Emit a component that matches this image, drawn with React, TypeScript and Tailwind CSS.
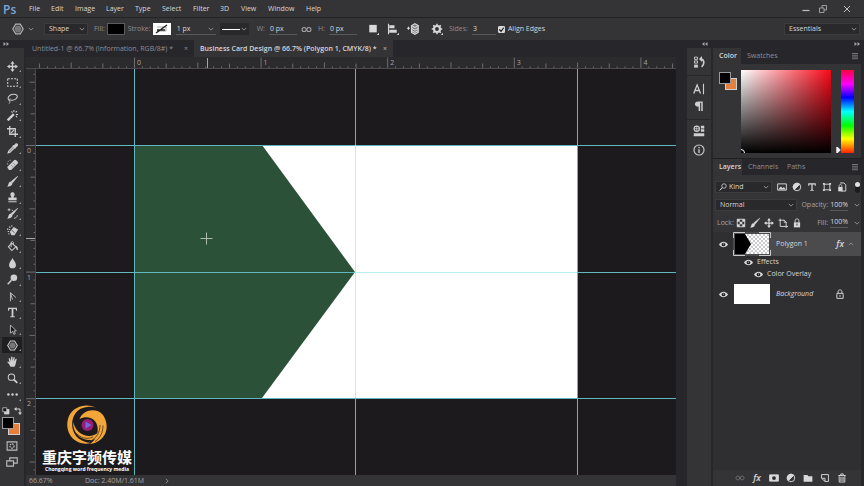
import { useState } from "react";
import type { ReactNode } from "react";
import clsx from "clsx";

const menus = [
  { label: "File", width: "w-[22px]" },
  { label: "Edit", width: "w-[24px]" },
  { label: "Image", width: "w-[31px]" },
  { label: "Layer", width: "w-[29px]" },
  { label: "Type", width: "w-[27px]" },
  { label: "Select", width: "w-[31px]" },
  { label: "Filter", width: "w-[27px]" },
  { label: "3D", width: "w-[21px]" },
  { label: "View", width: "w-[27px]" },
  { label: "Window", width: "w-[38px]" },
  { label: "Help", width: "w-[24px]" },
];

function Icon({ children, className = "size-3" }: { children: ReactNode; className?: string }) {
  return (
    <svg
      viewBox="0 0 16 16"
      className={clsx("shrink-0", className)}
      fill="none"
      stroke="currentColor"
      strokeWidth="1.5"
      aria-hidden="true"
    >
      {children}
    </svg>
  );
}

function Chevron({ className = "" }: { className?: string }) {
  return (
    <svg
      viewBox="0 0 8 8"
      className={clsx("size-[6px] shrink-0 pointer-events-none text-[#8f8e91]", className)}
      fill="none"
      stroke="currentColor"
      strokeWidth="1.3"
      aria-hidden="true"
    >
      <path d="M1 2.5 4 5.5 7 2.5" />
    </svg>
  );
}

const polygonShape = (
  <>
    <path d="M5 1.5h6L15 8l-4 6.5H5L1 8z" />
    <path d="M5.5 3.5h5L13 8l-2.5 4.5h-5L3 8z" fill="#77767a" stroke="none" />
  </>
);

const moveShape = (
  <path
    d="M8 0 11 4H9v3h3V5l4 3-4 3V9H9v3h2l-3 4-3-4h2V9H4v2L0 8l4-3v2h3V4H5z"
    fill="currentColor"
    stroke="none"
  />
);

const brushShape = (
  <>
    <path d="M15.5 0.5 8 10 6 8z" fill="currentColor" strokeWidth="1" />
    <path d="M5.5 8.5c2 .5 3 2 2 4-1.500 2.500-4.500 3-7.500 3 2-1.500 1.500-3 2.500-5 .7-1.300 1.700-2 3-2z" fill="currentColor" stroke="none" />
  </>
);

const tools = [
  { name: "Move", shape: moveShape },
  { name: "Rectangular Marquee", shape: <path d="M1 2.5h14v11H1z" strokeDasharray="3 1.7" /> },
  {
    name: "Lasso",
    shape: (
      <>
        <path d="M4 10.5C1.500 10 1 7.500 2.500 5 5 1.500 12 .5 14.500 3.500 16.500 7 11 11.500 6 10.500" />
        <path d="M6 9c-2-.8-3.500.5-3 1.800S6 12 6 10.500M3.500 12c1 1 .5 2.500-.5 3.500" strokeWidth="1.2" />
      </>
    ),
  },
  {
    name: "Magic Wand",
    shape: (
      <>
        <path d="M1 15 10 6" strokeWidth="3.5" />
        <path d="M10 0v3M14.500 1.500l-2 2M13 6.500h3M6.500 2l1.500 2M13 8.500l1.500 2" />
      </>
    ),
  },
  { name: "Crop", shape: <path d="M4 0v12h12M0 4h12v12M10 6l-4 4" strokeWidth="1.9" /> },
  {
    name: "Eyedropper",
    shape: (
      <>
        <path d="m8.500 3.500 4 4M10 5l2.500-3c1-1.500 3.500 0 2 2L12 6" fill="currentColor" strokeWidth="2" />
        <path d="M9.500 4.500 2.500 11.500 1.500 14.500l3-1 7-7z" fill="currentColor" fillOpacity=".6" />
      </>
    ),
  },
  {
    name: "Healing Brush",
    shape: (
      <>
        <path d="M4.500 8.500 11 2c1-1 5 2.500 4 4L8.500 12.500 5.500 15.500c-1.500.5-5-2.500-4-4z" fill="currentColor" />
        <path d="m5.500 8.500 3.500 3.500M8.500 5.500l3.500 3.500" stroke="#77767a" strokeWidth="1" />
        <path d="M1 8C0 4 3 .8 7 2" strokeDasharray="2 1.5" strokeWidth="1" />
      </>
    ),
  },
  { name: "Brush", shape: brushShape },
  {
    name: "Clone Stamp",
    shape: (
      <path
        d="M6.500 8C6 6.500 4.500 5 5 3c.5-3.500 5.500-3.500 6 0 .5 2-1 3.500-1.500 5H14v4H2V8zM2 13.500h12V15H2z"
        fill="currentColor"
        stroke="none"
      />
    ),
  },
  {
    name: "History Brush",
    shape: (
      <>
        {brushShape}
        <path d="M1 2.500h4M3 .5v4M7 3l2 1M10 15c3-.5 5-2 5-4.500" strokeWidth="1.3" />
      </>
    ),
  },
  {
    name: "Eraser",
    shape: (
      <>
        <path d="m5 10 5-6 5 3-4.500 7H7z" fill="currentColor" />
        <path d="m7 8 4 3" stroke="#343336" strokeWidth="1" />
        <path d="M0 6h2M3 3h2M6 1.500h2M1 9.500h2M3 6.500h1.500M2 13h1.500" strokeWidth="1.7" />
      </>
    ),
  },
  {
    name: "Paint Bucket",
    shape: (
      <>
        <path d="m7 3 6 5.500-6 5.500-5-5.500z" />
        <path d="M6 9V3c0-3 3.500-3 3.500 0v2" strokeWidth="1.2" />
        <path d="M12 7c3 .5 4.500 3 3.500 6-1.500.5-2-1-2-2.500z" fill="currentColor" stroke="none" />
      </>
    ),
  },
  {
    name: "Blur",
    shape: <path d="M8 0c2 4 5 6.500 5 10a5 5 0 0 1-10 0C3 6.500 6 4 8 0z" fill="currentColor" stroke="none" />,
  },
  {
    name: "Dodge",
    shape: (
      <>
        <circle cx="10" cy="5.5" r="4.8" fill="currentColor" stroke="none" />
        <path d="m6.500 9-5.500 6" strokeWidth="2" />
      </>
    ),
  },
  { name: "Pen", shape: <path d="M5 15V2.500L13 9.500M5 2.500l3 10" strokeWidth="1.2" /> },
  {
    name: "Type",
    shape: (
      <path
        d="M1.500 1h13v4.500h-1.300L12.500 3H9.300v10.300l2.200.5V15h-7v-1.200l2.200-.5V3H3.500l-.7 2.500H1.500z"
        fill="currentColor"
        stroke="none"
      />
    ),
  },
  { name: "Path Selection", shape: <path d="M5 1.500v12l3-3 2 4.500 2-1-2-4h3.500z" fill="#161518" strokeWidth="1.2" /> },
  { name: "Polygon", shape: polygonShape },
  {
    name: "Hand",
    shape: (
      <path
        d="M5 15.500C4 13 2.500 11 .5 9c0-1.300 1.500-1.300 3 .3L2.500 4c0-1.300 1.500-1.400 2 0l1 3.500L6 1.500C6.200.3 7.700.3 8 1.500v5.800l1.500-5c.5-1.200 2-.8 1.700.5l-.7 5 2-3.500c.8-1 2.200-.2 1.500 1-1 2.700-1 7-3 10.200z"
        fill="currentColor"
        stroke="none"
      />
    ),
  },
  {
    name: "Zoom",
    shape: (
      <>
        <circle cx="6.5" cy="6" r="4.7" />
        <path d="m10 9.500 5 5" strokeWidth="2.5" />
      </>
    ),
  },
  {
    name: "Edit Toolbar",
    shape: (
      <g fill="currentColor" stroke="none">
        <circle cx="2" cy="8" r="1.8" />
        <circle cx="8" cy="8" r="1.8" />
        <circle cx="14" cy="8" r="1.8" />
      </g>
    ),
  },
];

const linkShape = (
  <>
    <circle cx="4.5" cy="8" r="3" />
    <circle cx="11.5" cy="8" r="3" />
  </>
);

const adjustShape = (
  <>
    <circle cx="8" cy="8" r="6" />
    <path d="M12.300 3.700A6 6 0 0 0 3.700 12.300z" fill="currentColor" />
  </>
);

const imageShape = (
  <>
    <path d="M1 3h14v10H1z" />
    <path d="m2 12 4-5 3 3 2-2 3 4z" fill="currentColor" stroke="none" />
  </>
);

const frameShape = (
  <>
    <path d="M3.500 3.500h9v9h-9z" />
    <path d="M1.500 1.500h3v3h-3zM11.500 1.500h3v3h-3zM1.500 11.500h3v3h-3zM11.500 11.500h3v3h-3z" fill="currentColor" stroke="none" />
  </>
);

const lockShape = (
  <>
    <path d="M3 7h10v8H3z" fill="currentColor" stroke="none" />
    <path d="M5 7V4c0-3.500 6-3.500 6 0v3" />
    <path d="M8 9v3" stroke="#343336" />
  </>
);

const smartShape = (
  <>
    <path d="M5 1.500h6l3 3v10H7" />
    <path d="M2 8h7v7H2z" fill="currentColor" stroke="none" />
    <path d="M3.500 8V5.500c0-2 4-2 4 0V8" strokeWidth="1.2" />
  </>
);

function IconButton({
  label,
  children,
  className,
}: {
  label: string;
  children: ReactNode;
  className?: string;
}) {
  return (
    <button type="button" aria-label={label} title={label} className={clsx("flex items-center justify-center", className)}>
      {children}
    </button>
  );
}

function SelectBox({
  label,
  options,
  className,
}: {
  label: string;
  options: string[];
  className?: string;
}) {
  return (
    <label className={clsx("relative flex items-center bg-[#29282b] border border-[#3c3b3e]", className)}>
      <select aria-label={label} className="w-full appearance-none bg-transparent pl-1 outline-none">
        {options.map((option) => (
          <option key={option}>{option}</option>
        ))}
      </select>
      <Chevron className="absolute right-[2px]" />
    </label>
  );
}

function Field({ label, value, className }: { label: string; value: string; className: string }) {
  return (
    <label className="flex items-center gap-1">
      <span className="text-[#8f8e91]">{label}</span>
      <input
        type="text"
        defaultValue={value}
        className={clsx("h-3 border-b border-[#5a595c] bg-transparent px-px outline-none", className)}
      />
    </label>
  );
}

function MenuBar() {
  return (
    <header className="flex h-[18px] shrink-0 items-center border-b border-[#232225] bg-[#343336]">
      <svg viewBox="0 0 20 16" className="ml-[3px] h-4 w-5" role="img" aria-label="Ps">
        <text x="0" y="13" className="fill-[#7aa9d6] font-['Open_Sans'] text-[12px] font-semibold">
          Ps
        </text>
      </svg>
      <nav className="ml-[6px] flex">
        {menus.map((menu) => (
          <button key={menu.label} type="button" className={clsx("text-left", menu.width)}>
            {menu.label}
          </button>
        ))}
      </nav>
      <div className="ml-auto flex items-center pr-[11px] text-[#bdbcbf]">
        <IconButton label="Minimize" className="w-3">
          <Icon className="size-2">
            <path d="M1 11h14" strokeWidth="2.5" />
          </Icon>
        </IconButton>
        <IconButton label="Restore" className="ml-[5px] w-3">
          <Icon className="size-2">
            <path d="M1 6h9v9H1zM6 6V1h9v9h-5" />
          </Icon>
        </IconButton>
        <IconButton label="Close" className="ml-3 w-3">
          <Icon className="size-2">
            <path d="m2 2 12 12M14 2 2 14" strokeWidth="2" />
          </Icon>
        </IconButton>
      </div>
    </header>
  );
}

const corner = <path d="M16 13v3h-3z" fill="currentColor" stroke="none" />;

function OptionsBar() {
  return (
    <div className="flex h-[22px] shrink-0 items-center bg-[#343336] pl-3">
      <IconButton label="Polygon tool presets" className="gap-1 text-[#b5b4b7]">
        <Icon>{polygonShape}</Icon>
        <Chevron />
      </IconButton>
      <SelectBox label="Tool mode" options={["Shape", "Path", "Pixels"]} className="ml-[10px] h-3 w-11" />
      <span className="ml-[6px] text-[#8f8e91]">Fill:</span>
      <button type="button" aria-label="Fill color" className="ml-[2px] h-3 w-[18px] border border-[#5c5b5e] bg-black" />
      <span className="ml-[3px] text-[#8f8e91]">Stroke:</span>
      <button type="button" aria-label="Stroke color" className="ml-[2px] h-3 w-[18px] bg-white">
        <svg viewBox="0 0 18 12" fill="none" aria-hidden="true">
          <path d="M4 4h9v4H4" stroke="#a9a9a9" />
          <path d="M3 10 14 2M4 7h8" stroke="#222" strokeWidth="1.5" />
        </svg>
      </button>
      <label className="relative ml-[5px] flex items-center">
        <input
          type="text"
          aria-label="Stroke width"
          defaultValue="1 px"
          className="h-3 w-10 border-b border-[#5a595c] bg-transparent px-px outline-none"
        />
        <Chevron className="absolute right-[2px]" />
      </label>
      <button
        type="button"
        aria-label="Stroke type"
        className="ml-1 flex h-3 w-[29px] items-center justify-between bg-[#29282b] px-[2px]"
      >
        <span className="h-px w-[18px] bg-white" />
        <Chevron />
      </button>
      <div className="ml-2">
        <Field label="W:" value="0 px" className="w-7" />
      </div>
      <IconButton label="Link width and height" className="ml-1 text-[#a5a4a6]">
        <Icon className="size-[11px]">{linkShape}</Icon>
      </IconButton>
      <div className="ml-[6px]">
        <Field label="H:" value="0 px" className="w-7" />
      </div>
      <div className="ml-[10px] flex items-center gap-2">
        <IconButton label="Path operations">
          <Icon>
            <path d="M3 2.500h10v10H3z" fill="currentColor" stroke="none" />
            {corner}
          </Icon>
        </IconButton>
        <IconButton label="Path alignment">
          <Icon>
            <path d="M2 1v14" />
            <path d="M3 3h7v4H3zM3 9h10v4H3z" fill="currentColor" stroke="none" />
            {corner}
          </Icon>
        </IconButton>
        <IconButton label="Path arrangement">
          <Icon>
            <path d="M0 7h4M2 5v4" />
            <path d="M6 3.500 10.500 1 15 3.500v9L10.500 15 6 12.500z" fill="#77767a" />
            <path d="m6 3.500 4.500 2.500L15 3.500M6 7l4.500 2.500L15 7M6 10l4.500 2.500L15 10" />
          </Icon>
        </IconButton>
      </div>
      <IconButton label="Geometry options" className="ml-3">
        <Icon>
          <circle cx="8" cy="8" r="4" strokeWidth="2.8" />
          <path d="M8 1v2M8 13v2M1 8h2M13 8h2M3 3l1.500 1.500M11.500 11.500 13 13M13 3l-1.500 1.500M4.500 11.500 3 13" strokeWidth="2" />
          {corner}
        </Icon>
      </IconButton>
      <div className="ml-[6px]">
        <Field label="Sides:" value="3" className="w-6" />
      </div>
      <label className="ml-[2px] flex items-center gap-[3px]">
        <span className="relative flex">
          <input
            type="checkbox"
            defaultChecked
            className="peer size-[7px] appearance-none rounded-[1px] border border-[#d8d7da] checked:bg-[#d8d7da]"
          />
          <svg
            viewBox="0 0 8 8"
            className="pointer-events-none absolute inset-0 hidden size-[7px] peer-checked:block"
            fill="none"
            stroke="#1c1b1e"
            strokeWidth="1.4"
            aria-hidden="true"
          >
            <path d="M1.500 4 3.500 6 6.500 2" />
          </svg>
        </span>
        Align Edges
      </label>
      <SelectBox
        label="Workspace"
        options={["Essentials", "3D", "Painting", "Photography"]}
        className="mr-1 ml-auto h-3 w-[76px]"
      />
    </div>
  );
}

function Swatches({ className }: { className?: string }) {
  return (
    <div className={clsx("grid h-[18px] w-[18px] grid-cols-3 grid-rows-3", className)}>
      <button
        type="button"
        aria-label="Background color"
        className="col-span-2 col-start-2 row-span-2 row-start-2 border border-[#d0cfd2] bg-[#e5803c]"
      />
      <button
        type="button"
        aria-label="Foreground color"
        className="col-span-2 col-start-1 row-span-2 row-start-1 border border-[#9b9a9d] bg-black"
      />
    </div>
  );
}

function Collapse({ direction }: { direction: "left" | "right" }) {
  return (
    <svg viewBox="0 0 12 8" className="h-1 w-[6px] text-[#a5a4a6]" fill="currentColor" aria-hidden="true">
      {direction === "right" ? <path d="M1 0 6 4 1 8zM7 0l5 4-5 4z" /> : <path d="M5 0 0 4l5 4zM11 0 6 4l5 4z" />}
    </svg>
  );
}

function ToolBar() {
  const [active, setActive] = useState("Polygon");

  return (
    <aside className="flex w-6 shrink-0 flex-col bg-[#343336]">
      <div className="flex h-2 items-center bg-[#27262a] pl-[3px]">
        <Collapse direction="right" />
      </div>
      <div className="mt-[10px] flex h-[345px] flex-col justify-between pl-[2px]">
        {tools.map((tool) => (
          <button
            key={tool.name}
            type="button"
            aria-label={tool.name}
            title={tool.name}
            onClick={() => setActive(tool.name)}
            className={clsx(
              "relative flex h-4 w-5 items-center justify-center text-[#cfced1]",
              active === tool.name && "bg-[#1f1e21]"
            )}
          >
            <Icon className="size-[11px]">{tool.shape}</Icon>
            <svg viewBox="0 0 2 2" className="absolute right-[1px] bottom-[2px] size-[2px]" fill="#98979a">
              <path d="M2 0v2H0z" />
            </svg>
          </button>
        ))}
      </div>
      <div className="mt-1 flex items-center justify-between px-[2px] text-[#cfced1]">
        <IconButton label="Default colors">
          <Icon className="size-2">
            <path d="M5 5h9v9H5z" fill="currentColor" />
            <path d="M1.500 1.500h8v8h-8z" fill="#161518" />
          </Icon>
        </IconButton>
        <IconButton label="Switch colors">
          <Icon className="size-2">
            <path d="M3 4h9v9" strokeWidth="2" />
            <path d="M5 0v8L0 4zM8 11h8l-4 5z" fill="currentColor" stroke="none" />
          </Icon>
        </IconButton>
      </div>
      <Swatches className="mt-[2px] ml-[2px]" />
      <div className="mt-[5px] flex flex-col items-center gap-1 text-[#bdbcbf]">
        <IconButton label="Quick mask">
          <Icon>
            <path d="M1.500 2.500h13v11h-13z" />
            <circle cx="8" cy="8" r="2.8" strokeDasharray="2 1" />
          </Icon>
        </IconButton>
        <IconButton label="Screen mode">
          <Icon>
            <path d="M5 2.500h10v7H5z" />
            <path d="M1 6.500h9v7H1z" fill="#343336" />
          </Icon>
        </IconButton>
      </div>
    </aside>
  );
}

// pixels per inch on the rulers at the current zoom
const INCH = 126.6;

const marks = Array.from({ length: 90 }, (_, i) => i - 16);

function tickSize(mark: number) {
  if (mark % 16 === 0) return 11;
  if (mark % 8 === 0) return 6;
  if (mark % 4 === 0) return 5;
  return 2;
}

function HorizontalRuler() {
  return (
    <svg className="h-3 w-full bg-[#2b2a2d]" aria-hidden="true">
      {marks.map((mark) => {
        const x = 108.5 + (mark * INCH) / 16;
        return x < 10 ? null : (
          <path key={mark} d={`M${x} 11.5V${11.5 - tickSize(mark)}`} stroke="#6d6c6f" />
        );
      })}
      {[0, 1, 2, 3, 4].map((n) => (
        <text key={n} x={111 + n * INCH} y="8" className="fill-[#a5a4a6] text-[7px]">
          {n}
        </text>
      ))}
      <path d="M181.500 1v10" stroke="#a5a4a6" />
      <path d="M0 11.500h650" stroke="#4a494c" />
    </svg>
  );
}

function VerticalRuler() {
  return (
    <svg className="h-full w-[10px] shrink-0 bg-[#2b2a2d]" aria-hidden="true">
      {marks.slice(0, 60).map((mark) => (
        <path
          key={mark}
          d={`M9.5 ${76.5 + (mark * INCH) / 16}H${9.5 - tickSize(mark)}`}
          stroke="#6d6c6f"
        />
      ))}
      {[0, 1, 2].map((n) => (
        <text key={n} x="1" y={84 + n * INCH} className="fill-[#a5a4a6] text-[7px]">
          {n}
        </text>
      ))}
      <path d="M0 169.500h9" stroke="#a5a4a6" />
      <path d="M9.500 0v406" stroke="#4a494c" />
    </svg>
  );
}

function Logo() {
  return (
    <div className="absolute bottom-[3px] left-1 flex w-[94px] flex-col items-center text-white">
      <svg viewBox="0 0 40 40" className="size-10" aria-hidden="true">
        <g fill="#f2a63a">
          <path d="M29 4C20-1 7 2 2 12c-4 10-1 21 9 26 4 2 9 2 13 1-10-1-16-6-18-13C3 16 8 4 20 3c4-.5 7 0 9 1z" />
          <path d="M6 18c0 12 8 19 19 18 4-1 7-4 8-9-5 5-11 6-16 4-6-2-9-7-11-13z" />
          <path d="M12.500 15C16 6 29 3 36 11c5.500 8 5 19-3 25-3 2.500-6 3.500-10 4 7-5 9-13 7-19-2-7-10-10-17.500-6z" />
        </g>
        <path d="M8 28c5 6 12 8 18 5M22 38c8-4 11-10 11-17M28 37.500c6-4 8-10 8-16" stroke="#4a3320" strokeWidth=".8" fill="none" />
        <circle cx="20.5" cy="21" r="6" fill="#9a1b78" />
        <path d="m18.500 17.500 6 3.500-6 3.500z" fill="#6a6de0" />
      </svg>
      <p className="mt-1 font-['Noto_Sans_CJK_SC',sans-serif] text-[15px] leading-[18px] font-bold whitespace-nowrap">
        重庆字频传媒
      </p>
      <p className="text-[5px] leading-[6px] font-bold whitespace-nowrap">Chongqing word frequency media</p>
    </div>
  );
}

function Artboard() {
  return (
    <div className="relative min-w-0 flex-1 overflow-hidden bg-[#1c1a1d]">
      <svg viewBox="0 0 640 406" preserveAspectRatio="xMidYMid slice" className="absolute inset-0 h-full w-full">
        <path d="M98 76h443v253H98z" fill="#fff" />
        <path d="M98 76h128l93 127-93 126H98z" fill="#2b5138" />
        <g stroke="#62b6bd">
          <path d="M98.500 0v406M319.500 0v76M319.500 329v77M541.500 0v406" />
          <path d="M0 76.500h640M0 203.500h319M541 203.500h99M0 329.500h640" />
        </g>
        <path d="M319.500 76v253M319 203.500h222" stroke="#b5f0ef" />
        <path d="M164.500 169.500h12M170.500 163.500v12" stroke="#a9bcae" />
      </svg>
      <Logo />
    </div>
  );
}

function DocumentArea() {
  return (
    <main className="flex min-w-0 flex-1 flex-col bg-[#27262a] pl-[2px]">
      <div className="flex h-[17px] shrink-0" role="tablist">
        <div role="tab" aria-selected="false" className="flex w-[168px] items-center justify-between px-[6px] text-[#8f8e91]">
          <span className="whitespace-nowrap">Untitled-1 @ 66.7% (Information, RGB/8#) *</span>
          <button type="button" aria-label="Close Untitled-1">×</button>
        </div>
        <div
          role="tab"
          aria-selected="true"
          className="flex w-[199px] items-center justify-between bg-[#343336] px-[6px] font-semibold text-[#d8d7da]"
        >
          <span className="whitespace-nowrap">Business Card Design @ 66.7% (Polygon 1, CMYK/8) *</span>
          <button type="button" aria-label="Close Business Card Design" className="text-[#a5a4a6]">×</button>
        </div>
      </div>
      <HorizontalRuler />
      <div className="flex min-h-0 flex-1">
        <VerticalRuler />
        <Artboard />
      </div>
      <footer className="flex h-[11px] shrink-0 items-center bg-[#343336] text-[#a5a4a6]">
        <span className="w-[59px] pl-[3px]">66.67%</span>
        <span className="w-[72px]">Doc: 2.40M/1.61M</span>
        <button type="button" aria-label="Document info">
          <Chevron className="ml-[7px] -rotate-90" />
        </button>
      </footer>
    </main>
  );
}

function DockColumn() {
  return (
    <aside className="ml-[11px] flex w-6 shrink-0 flex-col bg-[#27262a] text-[#cfced1]">
      <div className="flex h-2 items-center justify-end pr-[3px]">
        <Collapse direction="left" />
      </div>
      <div className="flex h-[27px] items-center justify-center bg-[#343336]">
        <IconButton label="History">
          <Icon>
            <path d="M2 1.500h4v3H2zM2 6.500h4v3H2z" strokeWidth="1.2" />
            <path d="M1.500 11.500h5v4h-5z" fill="currentColor" stroke="none" />
            <path d="M10 4c5 0 6 6 1.500 10.500" strokeWidth="2.2" />
            <path d="M12 0v8L8 4z" fill="currentColor" stroke="none" />
          </Icon>
        </IconButton>
      </div>
      <div className="mt-px flex h-[43px] flex-col items-center justify-center gap-[5px] bg-[#343336]">
        <IconButton label="Character">
          <Icon>
            <path d="M1 14 5.500 2.500 10 14M2.500 10h6" strokeWidth="1.7" />
            <path d="M14 1v14" />
          </Icon>
        </IconButton>
        <IconButton label="Paragraph">
          <Icon>
            <path d="M13 2v12.500h-2V3.500H9.500v11h-2V9C1 9 1 2 7 2z" fill="currentColor" stroke="none" />
          </Icon>
        </IconButton>
      </div>
      <div className="mt-px flex flex-1 flex-col items-center gap-[7px] bg-[#343336] pt-[5px]">
        <IconButton label="Libraries">
          <Icon>
            <circle cx="5" cy="5" r="3.5" />
            <path d="M5 1v8M1 5h8" strokeWidth="1" />
            <path d="M10.500 1H15v3.500h-4.500zM10.500 5.500H15V9h-4.500zM1 11h14v4H1z" fill="currentColor" stroke="none" />
          </Icon>
        </IconButton>
        <IconButton label="Info">
          <Icon>
            <circle cx="8" cy="8" r="6.7" />
            <path d="M8 7v5M8 4v1.700" strokeWidth="1.8" />
          </Icon>
        </IconButton>
      </div>
    </aside>
  );
}

function PanelTabs({ tabs }: { tabs: { label: string; width: string }[] }) {
  return (
    <div role="tablist" className="flex h-4 items-stretch bg-[#27262a] text-[#8f8e91]">
      {tabs.map((tab, i) => (
        <button
          key={tab.label}
          type="button"
          role="tab"
          aria-selected={i === 0}
          className={clsx("pl-[6px] text-left", tab.width, i === 0 && "bg-[#343336] font-semibold text-[#d8d7da]")}
        >
          {tab.label}
        </button>
      ))}
      <IconButton label="Panel menu" className="mr-[2px] ml-auto">
        <Icon className="size-2">
          <path d="M2 3h12M2 6.500h12M2 10h12M2 13.500h12" />
        </Icon>
      </IconButton>
    </div>
  );
}

function ColorPanel() {
  return (
    <section className="bg-[#343336]">
      <PanelTabs
        tabs={[
          { label: "Color", width: "w-[28px]" },
          { label: "Swatches", width: "w-11" },
        ]}
      />
      <div className="flex h-[94px] pt-[6px] pl-[6px]">
        <Swatches className="mt-[2px]" />
        <div className="relative ml-1 h-[83px] flex-1 overflow-hidden bg-[linear-gradient(to_right,#ffffff,#f80818)]">
          <div className="absolute inset-0 bg-[linear-gradient(to_top,#000000,#00000000)]" />
          <span className="absolute -bottom-1 -left-1 size-2 rounded-full border border-white" />
        </div>
        <div className="flex h-[83px] w-[10px] items-end justify-end">
          <svg viewBox="0 0 6 8" className="h-[6px] w-[5px]" fill="#f1f0f3" aria-hidden="true">
            <path d="M0 0h2l4 4-4 4H0z" />
          </svg>
        </div>
        <div className="mr-[7px] h-[83px] w-[13px] bg-[linear-gradient(to_bottom,#ff0040,#ff00ff_17%,#0000ff_33%,#00ffff_50%,#00ff00_67%,#ffff00_83%,#ff2000)]" />
      </div>
    </section>
  );
}

const eyeShape = (
  <>
    <path d="M0 8c4-6.500 12-6.500 16 0-4 6.500-12 6.500-16 0z" fill="currentColor" stroke="none" />
    <circle cx="8" cy="8" r="3.3" fill="#242326" stroke="none" />
    <circle cx="8" cy="7" r="1" fill="currentColor" stroke="none" />
  </>
);

function Eye({ label }: { label: string }) {
  return (
    <IconButton label={`Toggle ${label}`}>
      <Icon className="size-[9px]">{eyeShape}</Icon>
    </IconButton>
  );
}

function LayerThumb() {
  return (
    <svg viewBox="0 0 38 24" className="h-6 w-[38px] shrink-0" aria-hidden="true">
      <defs>
        <pattern id="checker" width="4" height="4" patternUnits="userSpaceOnUse">
          <path d="M0 0h4v4H0z" fill="#fff" />
          <path d="M0 0h2v2H0zM2 2h2v2H2z" fill="#c9c8cb" />
        </pattern>
      </defs>
      <path d="M2 2h34v20H2z" fill="url(#checker)" />
      <path d="M2 2h10l6 10-6 10H2z" fill="#000" />
      <path d="M.5 6V.5H12M26 .5h11.500V6M37.500 18v5.500H26M12 23.500H.5V18" stroke="#c9c8cb" fill="none" />
    </svg>
  );
}

const filters = [
  { name: "Pixel layers", shape: imageShape },
  { name: "Adjustment layers", shape: adjustShape },
  {
    name: "Type layers",
    shape: <path d="M2 2h12v4h-1.500L12 4H9v8.500l2 .5v1H5v-1l2-.5V4H4l-.5 2H2z" fill="currentColor" stroke="none" />,
  },
  { name: "Shape layers", shape: frameShape },
  { name: "Smart objects", shape: smartShape },
];

const locks = [
  {
    name: "Lock transparent pixels",
    shape: (
      <>
        <path d="M2 2h12v12H2z" />
        <path d="M2 2h4v4H2zM10 2h4v4h-4zM6 6h4v4H6zM2 10h4v4H2zM10 10h4v4h-4z" fill="currentColor" stroke="none" />
      </>
    ),
  },
  { name: "Lock image pixels", shape: brushShape },
  { name: "Lock position", shape: moveShape },
  {
    name: "Lock artboard nesting",
    shape: (
      <>
        <path d="M1 3.500h9l3 3V16M3.500 1v12.500H16" />
        <path d="M10 3v4h4" strokeWidth="1.2" />
      </>
    ),
  },
  { name: "Lock all", shape: lockShape },
];

const layerActions = [
  { name: "Link layers", shape: linkShape, dim: true },
  {
    name: "Add a mask",
    shape: (
      <>
        <path d="M1 3h14v10H1z" fill="currentColor" />
        <circle cx="8" cy="8" r="3" fill="#29282b" stroke="none" />
      </>
    ),
  },
  { name: "New adjustment layer", shape: adjustShape },
  {
    name: "New group",
    shape: <path d="M1 3h6l1.500 2H15v9H1z" fill="currentColor" stroke="none" />,
  },
  { name: "New layer", shape: <path d="M2.500 2.500h11v11H8l-5.500-5zM8 13V8.500H3" /> },
  {
    name: "Delete layer",
    shape: (
      <>
        <path d="M2 4h12M6 3.500V1.500h4v2M3.500 5v9.500h9V5" />
        <path d="M6 6v7M8 6v7M10 6v7" strokeWidth="1.2" />
      </>
    ),
  },
];

function PercentField({ label, width }: { label: string; width: string }) {
  return (
    <label className="ml-auto flex items-center gap-[2px]">
      <span className="text-[#a5a4a6]">{label}</span>
      <input
        type="text"
        defaultValue="100%"
        className={clsx("border-b border-[#5a595c] bg-transparent text-right outline-none", width)}
      />
      <Chevron className="ml-[4px]" />
    </label>
  );
}

function LayersPanel() {
  return (
    <section className="flex flex-1 flex-col bg-[#2f2e31]">
      <PanelTabs
        tabs={[
          { label: "Layers", width: "w-[29px]" },
          { label: "Channels", width: "w-[39px]" },
          { label: "Paths", width: "w-7" },
        ]}
      />
      <div className="flex h-[57px] flex-col justify-between bg-[#343336] pt-[6px] pr-px pb-1 pl-[2px]">
        <div className="flex items-center">
          <div className="relative flex items-center">
            <SelectBox label="Filter type" options={["Kind", "Name", "Effect"]} className="h-3 w-[57px] pl-[9px]" />
            <Icon className="absolute left-1 size-2">
              <circle cx="10" cy="6" r="4.5" />
              <path d="m6.500 9-5 6" strokeWidth="2" />
            </Icon>
          </div>
          <div className="ml-[5px] flex gap-[5px]">
            {filters.map((filter) => (
              <IconButton key={filter.name} label={filter.name}>
                <Icon className="size-[10px]">{filter.shape}</Icon>
              </IconButton>
            ))}
          </div>
          <button
            type="button"
            aria-label="Toggle layer filtering"
            className="ml-auto flex h-[11px] w-[5px] items-start rounded-full bg-[#1c1b1e]"
          >
            <span className="size-[5px] rounded-full bg-[#e2e1e4]" />
          </button>
        </div>
        <div className="flex items-center">
          <SelectBox label="Blend mode" options={["Normal", "Multiply", "Screen"]} className="h-3 w-[82px]" />
          <PercentField label="Opacity:" width="w-[18px]" />
        </div>
        <div className="flex items-center">
          <span className="w-[21px] pl-[2px] text-[#a5a4a6]">Lock:</span>
          <div className="flex gap-1">
            {locks.map((lock) => (
              <IconButton key={lock.name} label={lock.name}>
                <Icon className="size-[10px]">{lock.shape}</Icon>
              </IconButton>
            ))}
          </div>
          <PercentField label="Fill:" width="w-[18px]" />
        </div>
      </div>
      <ul className="flex-1">
        <li className="flex h-6 items-center">
          <div className="flex w-5 justify-center">
            <Eye label="Polygon 1" />
          </div>
          <div className="flex h-6 flex-1 items-center bg-[#4b4a4d]">
            <LayerThumb />
            <span className="ml-[5px]">Polygon 1</span>
            <span className="ml-auto text-[9px] font-semibold italic">fx</span>
            <Chevron className="mr-[7px] ml-1 rotate-180" />
          </div>
        </li>
        <li className="flex h-3 items-center gap-1 pl-[31px]">
          <Eye label="Effects" />
          Effects
        </li>
        <li className="flex h-3 items-center gap-1 pl-[41px]">
          <Eye label="Color Overlay" />
          Color Overlay
        </li>
        <li className="mt-px flex h-[26px] items-center">
          <div className="flex w-5 justify-center">
            <Eye label="Background" />
          </div>
          <div className="ml-px h-5 w-9 bg-white" />
          <span className="ml-[6px] italic">Background</span>
          <Icon className="mr-4 ml-auto size-[10px]">
            <path d="M3 7h10v8H3zM5 7V4c0-3.500 6-3.500 6 0v3M8 9.500v3" />
          </Icon>
        </li>
      </ul>
      <footer className="flex h-4 items-center justify-end gap-[7px] bg-[#343336] pr-[14px]">
        {layerActions.map((action) => (
          <span key={action.name} className="flex items-center gap-[7px]">
            <IconButton label={action.name} className={clsx(action.dim && "text-[#6d6c6f]")}>
              <Icon className="size-[10px]">{action.shape}</Icon>
            </IconButton>
            {action.name === "Link layers" && (
              <button type="button" aria-label="Add a layer style" className="w-[10px] text-[9px] font-semibold italic">
                fx
              </button>
            )}
          </span>
        ))}
      </footer>
    </section>
  );
}

export default function App() {
  return (
    <div className="flex h-screen flex-col overflow-hidden bg-[#27262a] font-['Open_Sans',sans-serif] text-[7px] leading-[10px] text-[#d8d7da]">
      <MenuBar />
      <OptionsBar />
      <div className="flex min-h-0 flex-1">
        <ToolBar />
        <DocumentArea />
        <DockColumn />
        <div className="mr-[3px] ml-[2px] flex w-[148px] shrink-0 flex-col">
          <div className="flex h-2 items-center justify-end pr-px">
            <Collapse direction="right" />
          </div>
          <ColorPanel />
          <div className="h-px bg-[#1f1e21]" />
          <LayersPanel />
        </div>
      </div>
    </div>
  );
}
